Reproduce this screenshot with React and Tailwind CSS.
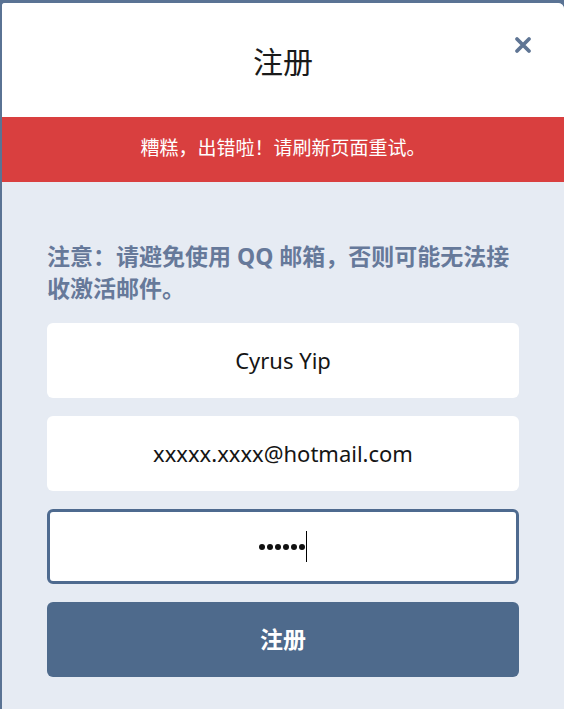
export default function App() {
  return (
    <div className="min-h-[709px] h-[709px] overflow-hidden bg-[#5a7394] pt-[3px] pl-[2px]" style={{ fontFamily: '"Noto Sans", "Noto Sans CJK SC", sans-serif' }}>
      <div className="w-[562px] h-[706px] rounded-tr-[6px] rounded-tl-[3px] overflow-hidden bg-[#e6ebf3] flex flex-col">
        {/* header */}
        <div className="relative h-[114px] bg-white flex items-center justify-center">
          <h2 className="text-[30px] text-[#1a1a1a] pt-[2px]">注册</h2>
          <button className="absolute right-[32px] top-[33px] text-[#5f7594]">
            <svg width="18" height="18" viewBox="0 0 18 18" fill="none" stroke="currentColor" strokeWidth="3.8" strokeLinecap="round">
              <path d="M3 3L15 15M15 3L3 15" />
            </svg>
          </button>
        </div>

        {/* error */}
        <div className="h-[65px] bg-[#d93f3f] flex items-center justify-center text-white text-[19px] pb-[2px]">
          糟糕，出错啦！请刷新页面重试。
        </div>

        {/* body */}
        <div className="px-[45px] pt-[58px] flex flex-col">
          <p className="text-[23px] leading-[32px] font-bold text-[#66799a] mb-[19px]">
            注意：请避免使用 QQ 邮箱，否则可能无法接收激活邮件。
          </p>
          <div className="flex flex-col gap-[18px]">
            <div className="h-[75px] bg-white rounded-[6px] flex items-center justify-center text-[22px] text-[#151515]">
              Cyrus Yip
            </div>
            <div className="h-[75px] bg-white rounded-[6px] flex items-center justify-center text-[22px] text-[#151515]">
              xxxxx.xxxx@hotmail.com
            </div>
            <div className="h-[75px] bg-white rounded-[6px] border-[3px] border-[#4e6a8f] flex items-center justify-center">
              <div className="flex items-center gap-[2px]">
                <span className="w-[6px] h-[6px] rounded-full bg-[#111]"></span>
                <span className="w-[6px] h-[6px] rounded-full bg-[#111]"></span>
                <span className="w-[6px] h-[6px] rounded-full bg-[#111]"></span>
                <span className="w-[6px] h-[6px] rounded-full bg-[#111]"></span>
                <span className="w-[6px] h-[6px] rounded-full bg-[#111]"></span>
                <span className="w-[6px] h-[6px] rounded-full bg-[#111]"></span>
              </div>
              <span className="w-px h-[31px] bg-black ml-[1px]"></span>
            </div>
            <button className="h-[75px] bg-[#4e6a8c] rounded-[6px] text-white text-[23px] font-bold">
              注册
            </button>
          </div>
        </div>
      </div>
    </div>
  );
}
